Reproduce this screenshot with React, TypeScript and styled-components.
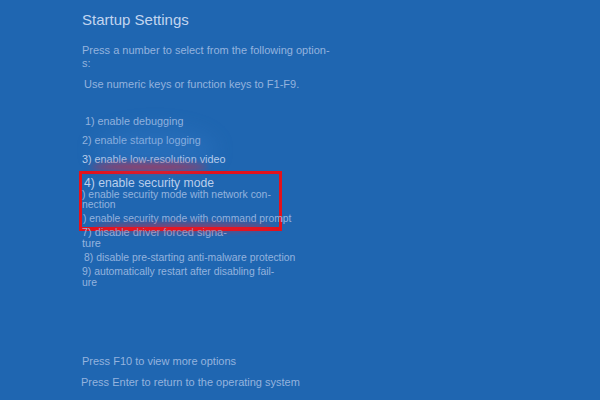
import styled, { createGlobalStyle } from 'styled-components';

const GlobalStyle = createGlobalStyle`
  html, body {
    margin: 0;
    padding: 0;
    background: #1f66b1;
  }
`;

const Color = {
  BG: '#1f66b1',
  TITLE: '#c2d5ef',
  TEXT: '#94b3de',
  BRIGHT: '#bccfec',
  RED: '#e3121c',
};

const Screen = styled.div`
  position: relative;
  width: 600px;
  height: 400px;
  box-sizing: border-box;
  padding: 10px 0 0 82px;
  display: flex;
  flex-direction: column;
  align-items: flex-start;
  overflow: hidden;
  background-color: ${Color.BG};
  font-family: 'Liberation Sans', Arial, sans-serif;
  color: ${Color.TEXT};
`;

const Title = styled.h1`
  margin: 0;
  font-size: 15px;
  font-weight: normal;
  line-height: 20px;
  color: ${Color.TITLE};
`;

const Intro = styled.p<{ $top?: number; $indent?: number }>`
  margin: ${p => p.$top ?? 0}px 0 0 ${p => p.$indent ?? 0}px;
  font-size: 11px;
  line-height: 13px;
  white-space: nowrap;
`;

const OptionList = styled.div`
  display: flex;
  flex-direction: column;
  align-items: flex-start;
`;

const Option = styled.div<{
  $size?: number
  $lh?: number
  $top?: number
  $indent?: number
  $bright?: boolean
}>`
  margin-top: ${p => p.$top ?? 0}px;
  margin-left: ${p => p.$indent ?? 0}px;
  font-size: ${p => p.$size ?? 10.8}px;
  line-height: ${p => p.$lh ?? 13}px;
  color: ${p => (p.$bright ? Color.BRIGHT : Color.TEXT)};
  white-space: nowrap;
`;

const SafeModeBox = styled.div`
  display: flex;
  flex-direction: column;
  width: 197px;
  margin: 5px 0 0 -3px;
  padding: 3px 0 3px 0;
  border: 3px solid ${Color.RED};
  border-bottom-width: 4px;
`;

const Footer = styled.div`
  margin-top: 67px;
  display: flex;
  flex-direction: column;
  gap: 8px;
`;

const FooterLine = styled.div<{ $indent?: number }>`
  margin-left: ${p => p.$indent ?? 0}px;
  font-size: 11px;
  line-height: 13px;
  white-space: nowrap;
`;

const Smear = styled.div<{ $x: number; $y: number; $w: number; $h: number }>`
  position: absolute;
  left: ${p => p.$x}px;
  top: ${p => p.$y}px;
  width: ${p => p.$w}px;
  height: ${p => p.$h}px;
  border-radius: 50%;
  background: rgba(232, 30, 50, 0.6);
  filter: blur(3px);
  pointer-events: none;
`;

const Haze = styled.div<{ $x: number; $y: number; $w: number; $h: number }>`
  position: absolute;
  left: ${p => p.$x}px;
  top: ${p => p.$y}px;
  width: ${p => p.$w}px;
  height: ${p => p.$h}px;
  border-radius: 50%;
  background: rgba(70, 140, 220, 0.2);
  filter: blur(10px);
  pointer-events: none;
`;

export default function App() {
  return (
    <>
      <GlobalStyle />
      <Screen>
        <Haze $x={95} $y={128} $w={120} $h={44} />
        <Smear $x={90} $y={163} $w={118} $h={8} />
        <Smear $x={92} $y={224} $w={182} $h={7} />

        <Title>Startup Settings</Title>

        <Intro $top={14}>
          Press a number to select from the following option-
          <br />
          s:
        </Intro>
        <Intro $top={8} $indent={2}>Use numeric keys or function keys to F1-F9.</Intro>

        <OptionList>
          <Option $top={24} $indent={3}>1) enable debugging</Option>
          <Option $top={6}>2) enable startup logging</Option>
          <Option $top={6} $bright>3) enable low-resolution video</Option>

          <SafeModeBox>
            <Option $size={12.2} $indent={2} $bright>4) enable security mode</Option>
            <Option $size={10.4} $lh={10}>
              ) enable security mode with network con-
              <br />
              nection
            </Option>
            <Option $size={10.3} $lh={10} $top={4} $indent={1}>
              ) enable security mode with command prompt
            </Option>
          </SafeModeBox>

          <Option $top={-4} $size={11} $lh={11}>
            7) disable driver forced signa-
            <br />
            ture
          </Option>
          <Option $top={3} $size={10.4} $lh={11} $indent={2}>
            8) disable pre-starting anti-malware protection
          </Option>
          <Option $top={3} $size={10.4} $lh={11}>
            9) automatically restart after disabling fail-
            <br />
            ure
          </Option>
        </OptionList>

        <Footer>
          <FooterLine>Press F10 to view more options</FooterLine>
          <FooterLine $indent={-1}>Press Enter to return to the operating system</FooterLine>
        </Footer>
      </Screen>
    </>
  );
}
